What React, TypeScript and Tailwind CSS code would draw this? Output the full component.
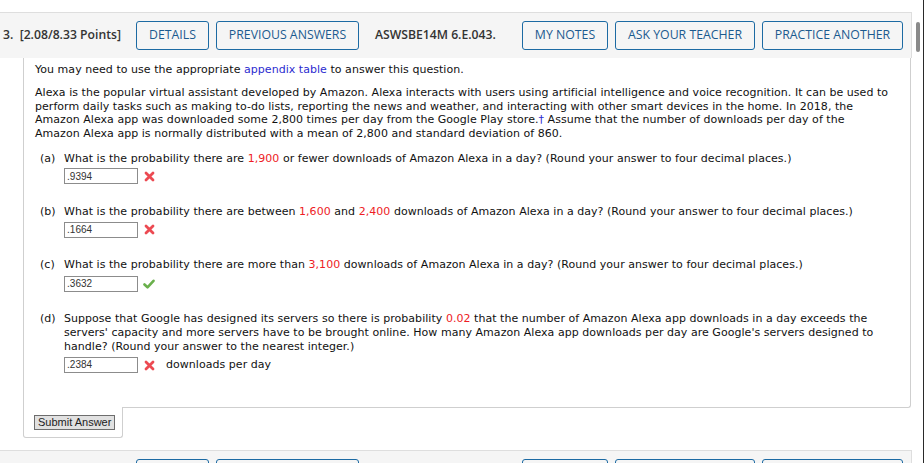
import React from "react";

const Btn = ({ w, children }: { w: string; children?: React.ReactNode }) => (
  <div
    className={`${w} h-[29px] flex items-center justify-center border border-[#1c6aa3] rounded-[3px] text-[#1b5a8f] text-[12.3px] font-medium whitespace-nowrap`}
  >
    {children}
  </div>
);

const Header = ({ blank = false }: { blank?: boolean }) => (
  <div
    className="h-[46px] flex items-center bg-[#f5f5f5] border-t border-[#dedede] border-r pl-[3px] pr-[8px]"
    style={{ fontFamily: '"Open Sans", sans-serif' }}
  >
    <span className="w-[119px] text-[12.2px] font-semibold text-[#333] whitespace-nowrap">{blank ? "" : "3.\u00a0 [2.08/8.33 Points]"}</span>
    <div className="ml-[14px]">
      <Btn w="w-[73px]">{blank ? null : "DETAILS"}</Btn>
    </div>
    <div className="ml-[7px]">
      <Btn w="w-[143px]">{blank ? null : "PREVIOUS ANSWERS"}</Btn>
    </div>
    <span className="ml-[16px] text-[12.2px] font-semibold text-[#333] whitespace-nowrap">{blank ? "" : "ASWSBE14M 6.E.043."}</span>
    <div className="ml-auto flex gap-[7px]">
      <Btn w="w-[86px]">{blank ? null : "MY NOTES"}</Btn>
      <Btn w="w-[140px]">{blank ? null : "ASK YOUR TEACHER"}</Btn>
      <Btn w="w-[141px]">{blank ? null : "PRACTICE ANOTHER"}</Btn>
    </div>
  </div>
);

const Red = ({ children }: { children: React.ReactNode }) => <span className="text-[#ee1c25]">{children}</span>;

const XIcon = () => (
  <svg width="11" height="11" viewBox="0 0 11 11" className="ml-[6px]">
    <path d="M2 2 L9 9 M9 2 L2 9" stroke="#ec4a52" strokeWidth="2.8" strokeLinecap="round" />
  </svg>
);

const CheckIcon = () => (
  <svg width="12" height="10" viewBox="0 0 12 10" className="ml-[5px]">
    <path d="M1.5 5.5 L4.5 8.3 L10.5 1.8" stroke="#6ab04c" strokeWidth="2.6" fill="none" strokeLinecap="round" strokeLinejoin="round" />
  </svg>
);

const Input = ({ v }: { v: string }) => (
  <div
    className="w-[74px] h-[16px] border border-[#8c8c8c] bg-white flex items-center pl-[2px] text-[10px] text-[#333]"
    style={{ fontFamily: '"Liberation Sans", Arial, sans-serif' }}
  >
    {v}
  </div>
);

const Part = ({ label, children }: { label: string; children: React.ReactNode }) => (
  <div className="flex">
    <span className="w-[29px] pl-[5px] shrink-0">{label}</span>
    <div className="flex-1">{children}</div>
  </div>
);

export default function App() {
  return (
    <div className="w-[924px] h-[463px] overflow-hidden bg-white flex">
      <div className="w-[912px] pt-[12px]">
        <Header />
        <div className="ml-[23px] w-[888px]">
          <div
            className="border-l border-r border-b border-[#cfcfcf] rounded-br-[3px] pl-[11px] pt-[5px] h-[350px] text-[11px] leading-[13.65px] text-[#111]"
            style={{ fontFamily: '"DejaVu Sans", Verdana, sans-serif', letterSpacing: "0.04px" }}
          >
            <p>
              You may need to use the appropriate <span className="text-[#2b2bd0]">appendix table</span> to answer this question.
            </p>
            <p className="mt-[9.5px] whitespace-nowrap">
              Alexa is the popular virtual assistant developed by Amazon. Alexa interacts with users using artificial intelligence and voice recognition. It can be used to
              <br />
              perform daily tasks such as making to-do lists, reporting the news and weather, and interacting with other smart devices in the home. In 2018, the
              <br />
              Amazon Alexa app was downloaded some 2,800 times per day from the Google Play store.<span className="text-[#2b2bd0]">†</span> Assume that the number of downloads per day of the
              <br />
              Amazon Alexa app is normally distributed with a mean of 2,800 and standard deviation of 860.
            </p>

            <div className="mt-[11px]">
              <Part label="(a)">
                <p>
                  What is the probability there are <Red>1,900</Red> or fewer downloads of Amazon Alexa in a day? (Round your answer to four decimal places.)
                </p>
                <div className="flex items-center mt-[3px]">
                  <Input v=".9394" />
                  <XIcon />
                </div>
              </Part>
            </div>

            <div className="mt-[20.5px]">
              <Part label="(b)">
                <p>
                  What is the probability there are between <Red>1,600</Red> and <Red>2,400</Red> downloads of Amazon Alexa in a day? (Round your answer to four decimal places.)
                </p>
                <div className="flex items-center mt-[3px]">
                  <Input v=".1664" />
                  <XIcon />
                </div>
              </Part>
            </div>

            <div className="mt-[20.5px]">
              <Part label="(c)">
                <p>
                  What is the probability there are more than <Red>3,100</Red> downloads of Amazon Alexa in a day? (Round your answer to four decimal places.)
                </p>
                <div className="flex items-center mt-[4px]">
                  <Input v=".3632" />
                  <CheckIcon />
                </div>
              </Part>
            </div>

            <div className="mt-[20.5px]">
              <Part label="(d)">
                <p className="whitespace-nowrap">
                  Suppose that Google has designed its servers so there is probability <Red>0.02</Red> that the number of Amazon Alexa app downloads in a day exceeds the
                  <br />
                  servers' capacity and more servers have to be brought online. How many Amazon Alexa app downloads per day are Google's servers designed to
                  <br />
                  handle? (Round your answer to the nearest integer.)
                </p>
                <div className="flex items-center mt-[4px]">
                  <Input v=".2384" />
                  <XIcon />
                  <span className="ml-[11px]">downloads per day</span>
                </div>
              </Part>
            </div>
          </div>
          <div className="relative -mt-px w-[100px] h-[31px] bg-white border-l border-r border-b border-[#cfcfcf] rounded-b-[3px] flex items-center pl-[10px]">
            <div
              className="h-[15px] px-[3px] flex items-center bg-[#e1e1e1] border border-[#6d6d6d] text-[11px] text-[#222] whitespace-nowrap"
              style={{ fontFamily: '"Liberation Sans", Arial, sans-serif' }}
            >
              Submit Answer
            </div>
          </div>
        </div>
        <div className="mt-[12px]">
          <Header blank />
        </div>
      </div>
      <div className="w-[12px] h-full flex">
        <div className="w-[11px] pt-[22px] flex justify-center">
          <div className="w-[4px] h-[30px] bg-[#8a8a8a] rounded-[2px] ml-[1px]" />
        </div>
        <div className="w-[1px] h-full bg-[#2a2a2a]" />
      </div>
    </div>
  );
}
